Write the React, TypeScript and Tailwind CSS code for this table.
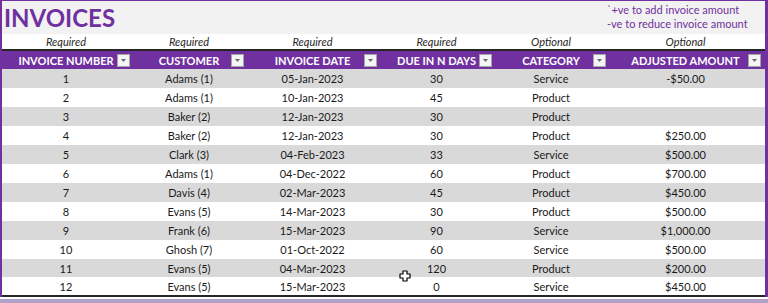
const COLS = "grid grid-cols-[132px_114px_133px_115px_114px_155px]";

const heads = [
  { req: "Required", label: "INVOICE NUMBER" },
  { req: "Required", label: "CUSTOMER" },
  { req: "Required", label: "INVOICE DATE" },
  { req: "Required", label: "DUE IN N DAYS" },
  { req: "Optional", label: "CATEGORY" },
  { req: "Optional", label: "ADJUSTED AMOUNT" },
];

const rows: string[][] = [
  ["1", "Adams (1)", "05-Jan-2023", "30", "Service", "-$50.00"],
  ["2", "Adams (1)", "10-Jan-2023", "45", "Product", ""],
  ["3", "Baker (2)", "12-Jan-2023", "30", "Product", ""],
  ["4", "Baker (2)", "12-Jan-2023", "30", "Product", "$250.00"],
  ["5", "Clark (3)", "04-Feb-2023", "33", "Service", "$500.00"],
  ["6", "Adams (1)", "04-Dec-2022", "60", "Product", "$700.00"],
  ["7", "Davis (4)", "02-Mar-2023", "45", "Product", "$450.00"],
  ["8", "Evans (5)", "14-Mar-2023", "30", "Product", "$500.00"],
  ["9", "Frank (6)", "15-Mar-2023", "90", "Service", "$1,000.00"],
  ["10", "Ghosh (7)", "01-Oct-2022", "60", "Service", "$500.00"],
  ["11", "Evans (5)", "04-Mar-2023", "120", "Product", "$200.00"],
  ["12", "Evans (5)", "15-Mar-2023", "0", "Service", "$450.00"],
];

function FilterButton() {
  return (
    <span className="absolute right-[4px] bottom-[2px] w-[13px] h-[13px] bg-[#f4f4f4] border border-[#a6a6a6] flex items-center justify-center">
      <svg width="5" height="3" viewBox="0 0 5 3">
        <path d="M0 0h5L2.5 3z" fill="#6b6b6b" />
      </svg>
    </span>
  );
}

export default function App() {
  return (
    <div className="w-[768px] h-[303px] bg-[#b1a0c7] font-['Lato','Noto_Sans',sans-serif] overflow-hidden relative">
      <div className="border-l-2 border-r-[3px] border-t border-[#7030a0] bg-white">
        <div className="h-[33px] bg-[#f2f2f2] flex items-center justify-between">
          <h1 className="pl-[2px] text-[24px] font-bold text-[#7030a0] leading-none">INVOICES</h1>
          <div className="mr-[14px] self-start pt-[2px] text-[11px] leading-[14px] text-[#7030a0] w-[144px]">
            <div>`+ve to add invoice amount</div>
            <div>-ve to reduce invoice amount</div>
          </div>
        </div>

        <div className={`${COLS} h-[15px] items-center text-[11px] italic text-[#262626]`}>
          {heads.map((h, i) => (
            <div key={i} className="text-center pr-[4px] leading-none">
              {h.req}
            </div>
          ))}
        </div>

        <div className={`${COLS} h-[20px] bg-[#7030a0] border-t-2 border-[#262626]`}>
          {heads.map((h, i) => (
            <div
              key={i}
              className="relative flex items-center justify-center pr-[4px] text-[11px] font-bold text-white leading-none"
            >
              {h.label}
              <FilterButton />
            </div>
          ))}
        </div>

        {rows.map((r, ri) => (
          <div
            key={ri}
            className={`${COLS} ${ri < 10 ? "h-[19px]" : "h-[18px]"} ${
              ri % 2 === 0 ? "bg-[#d9d9d9]" : "bg-white"
            } text-[11px] text-[#1a1a1a]`}
          >
            {r.map((c, ci) => (
              <div key={ci} className="flex items-center justify-center pr-[4px] leading-none">
                {c}
              </div>
            ))}
          </div>
        ))}
        <div className="h-[2px] bg-[#262626]" />
      </div>
      <div className="h-[2px] bg-white" />

      {/* mouse cursor */}
      <svg className="absolute left-[399px] top-[270px]" width="12" height="12" viewBox="0 0 12 12">
        <path
          d="M4 1h4v3h3v4H8v3H4V8H1V4h3z"
          fill="#ffffff"
          stroke="#000000"
          strokeWidth="1.2"
          strokeLinejoin="round"
        />
      </svg>
    </div>
  );
}
